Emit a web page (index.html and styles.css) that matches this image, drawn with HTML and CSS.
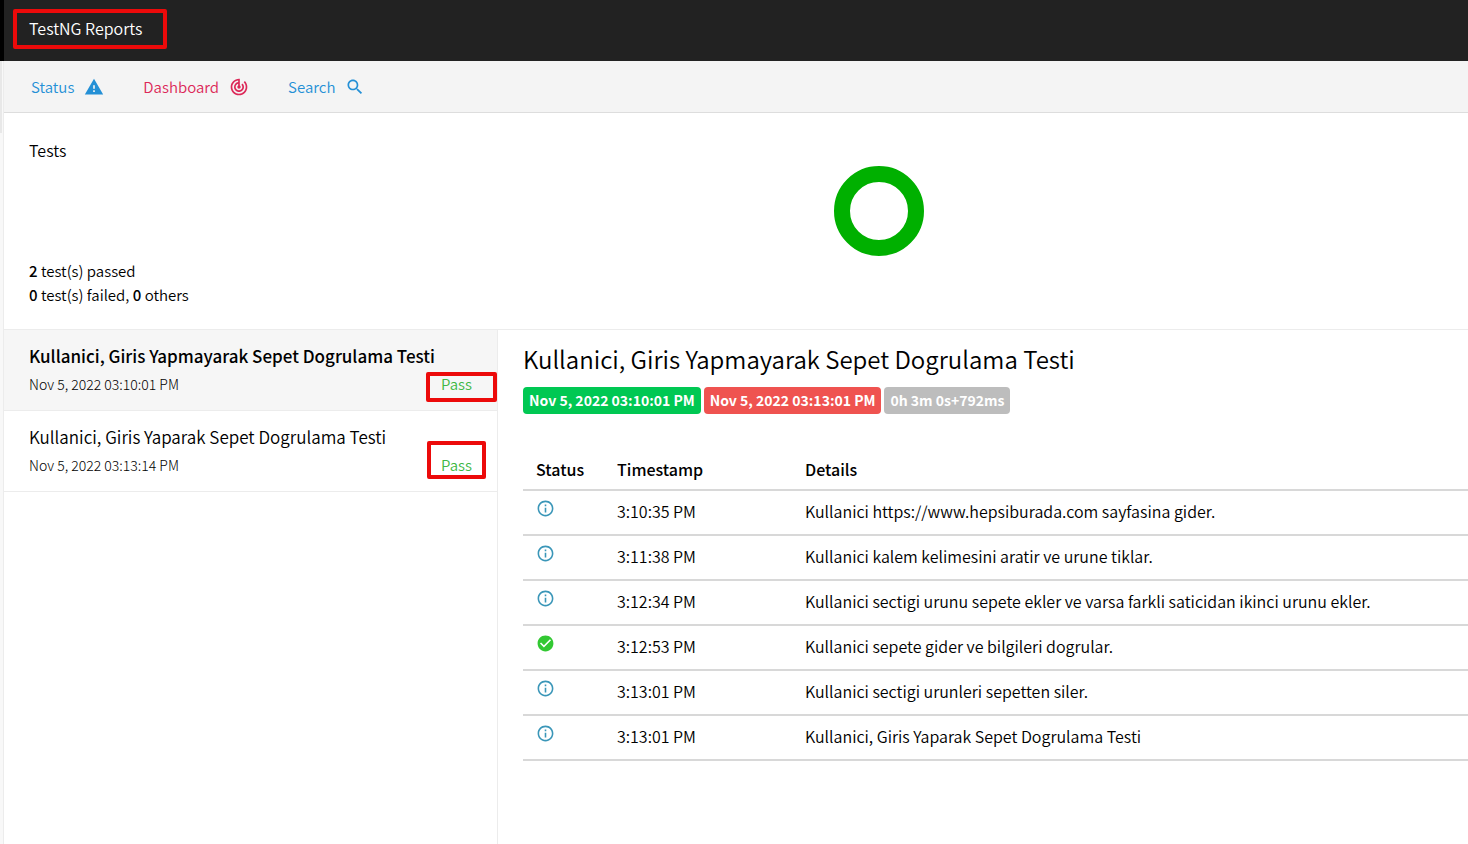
FILE: index.html
```html
<!DOCTYPE html>
<html lang="en">
<head>
<meta charset="utf-8">
<title>TestNG Reports</title>
<link rel="stylesheet" href="styles.css">
</head>
<body>
<svg class="sprite" aria-hidden="true">
  <symbol id="info" viewBox="0 0 24 24"><path d="M11 17h2v-6h-2v6zm1-15C6.480 2 2 6.480 2 12s4.480 10 10 10 10-4.480 10-10S17.520 2 12 2zm0 18c-4.410 0-8-3.590-8-8s3.590-8 8-8 8 3.590 8 8-3.590 8-8 8zM11 9h2V7h-2v2z"/></symbol>
  <symbol id="check" viewBox="0 0 24 24"><path d="M12 2C6.480 2 2 6.480 2 12s4.480 10 10 10 10-4.480 10-10S17.520 2 12 2zm-2 15l-5-5 1.410-1.410L10 14.170l7.590-7.590L19 8l-9 9z"/></symbol>
</svg>
<div class="shell">
  <div class="rail"><div class="rail-top"></div><div class="rail-thumb"></div></div>
  <div class="app">
    <header class="topbar"><h1 class="brand mark mark-brand">TestNG Reports</h1></header>
    <nav class="toolbar">
      <a class="tool" href="#status">Status
        <svg class="tool-icon" viewBox="0 0 24 24"><path d="M1 21h22L12 2 1 21zm12-3h-2v-2h2v2zm0-4h-2v-4h2v4z"/></svg></a>
      <a class="tool tool-active" href="#dashboard">Dashboard
        <svg class="tool-icon" viewBox="0 0 24 24"><path d="M19.070 4.930l-1.410 1.410C19.100 7.790 20 9.790 20 12c0 4.420-3.580 8-8 8s-8-3.580-8-8c0-4.080 3.050-7.440 7-7.930v2.020C8.160 6.570 6 9.030 6 12c0 3.310 2.690 6 6 6s6-2.690 6-6c0-1.660-.67-3.160-1.760-4.240l-1.410 1.410C15.550 9.900 16 10.900 16 12c0 2.210-1.790 4-4 4s-4-1.790-4-4c0-1.860 1.280-3.410 3-3.860v2.140c-.6.350-1 .98-1 1.720 0 1.100.9 2 2 2s2-.9 2-2c0-.74-.4-1.380-1-1.720V2h-1C6.480 2 2 6.480 2 12s4.480 10 10 10 10-4.480 10-10c0-2.760-1.120-5.260-2.930-7.070z"/></svg></a>
      <a class="tool" href="#search">Search
        <svg class="tool-icon" viewBox="0 0 24 24"><path d="M15.500 14h-.79l-.28-.27C15.410 12.590 16 11.110 16 9.500 16 5.910 13.090 3 9.500 3S3 5.910 3 9.500 5.910 16 9.500 16c1.610 0 3.090-.59 4.230-1.570l.27.28v.79l5 4.990L20.490 19l-4.990-5zm-6 0C7.010 14 5 11.990 5 9.500S7.010 5 9.500 5 14 7.010 14 9.500 11.990 14 9.500 14z"/></svg></a>
    </nav>
    <section class="summary">
      <div class="summary-text">
        <h2 class="summary-title">Tests</h2>
        <div class="counts"><div><b>2</b> test(s) passed</div><div><b>0</b> test(s) failed, <b>0</b> others</div></div>
      </div>
      <svg class="donut" viewBox="0 0 90 90" role="img" aria-label="2 passed"><circle cx="45" cy="45" r="37"/></svg>
    </section>
    <main class="main">
      <ul class="tests">
        <li class="test test-active">
          <div class="test-name">Kullanici, Giris Yapmayarak Sepet Dogrulama Testi</div>
          <div class="test-meta"><span class="date">Nov 5, 2022 03:10:01 PM</span><span class="pass mark mark-first">Pass</span></div>
        </li>
        <li class="test">
          <div class="test-name">Kullanici, Giris Yaparak Sepet Dogrulama Testi</div>
          <div class="test-meta"><span class="date">Nov 5, 2022 03:13:14 PM</span><span class="pass mark mark-second">Pass</span></div>
        </li>
      </ul>
      <section class="detail">
        <h2 class="detail-title">Kullanici, Giris Yapmayarak Sepet Dogrulama Testi</h2>
        <div class="labels">
          <span class="label label-start">Nov 5, 2022 03:10:01 PM</span>
          <span class="label label-end">Nov 5, 2022 03:13:01 PM</span>
          <span class="label label-time">0h 3m 0s+792ms</span>
        </div>
        <table class="steps">
          <thead><tr><th class="col-status">Status</th><th class="col-time">Timestamp</th><th>Details</th></tr></thead>
          <tbody>
            <tr><td><svg class="state"><use href="#info"/></svg></td><td>3:10:35 PM</td><td>Kullanici https://www.hepsiburada.com sayfasina gider.</td></tr>
            <tr><td><svg class="state"><use href="#info"/></svg></td><td>3:11:38 PM</td><td>Kullanici kalem kelimesini aratir ve urune tiklar.</td></tr>
            <tr><td><svg class="state"><use href="#info"/></svg></td><td>3:12:34 PM</td><td>Kullanici sectigi urunu sepete ekler ve varsa farkli saticidan ikinci urunu ekler.</td></tr>
            <tr><td><svg class="state state-pass"><use href="#check"/></svg></td><td>3:12:53 PM</td><td>Kullanici sepete gider ve bilgileri dogrular.</td></tr>
            <tr><td><svg class="state"><use href="#info"/></svg></td><td>3:13:01 PM</td><td>Kullanici sectigi urunleri sepetten siler.</td></tr>
            <tr><td><svg class="state"><use href="#info"/></svg></td><td>3:13:01 PM</td><td>Kullanici, Giris Yaparak Sepet Dogrulama Testi</td></tr>
          </tbody>
        </table>
      </section>
    </main>
  </div>
</div>
</body>
</html>
```
FILE: styles.css
```css
* { box-sizing: border-box; }
body {
  margin: 0;
  background: #fff;
  color: #000;
  font-family: "Noto Sans CJK SC", "Open Sans", sans-serif;
  font-size: 16px;
  font-weight: 350;
  line-height: 24px;
}
h1, h2 { margin: 0; font-weight: 350; }
.sprite { display: block; width: 0; height: 0; }
.shell { display: flex; min-height: 100vh; }
.rail { flex: none; width: 4px; background: #f8f8f8; border-right: 1px solid #ececec; }
.rail-top { width: 4px; height: 61px; background: #000; }
.rail-thumb { width: 2px; height: 72px; background: #e8e8e8; }
.app { flex: 1; min-width: 0; display: flex; flex-direction: column; }

.topbar { height: 61px; padding: 16px 25px; background: #222; color: #fff; }
.brand { display: inline-block; font-size: 16px; line-height: 24px; }

.mark { position: relative; }
.mark::after {
  content: "";
  position: absolute;
  border: 4px solid #ec0a0a;
  border-radius: 2px;
}
.mark-brand::after { inset: -7px -25px -9px -16px; }
.mark-first::after { inset: 0 -25px -6px -15px; }
.mark-second::after { inset: -12px -14px -2px -14px; }

.toolbar {
  display: flex;
  gap: 39px;
  height: 52px;
  padding: 0 27px;
  align-items: center;
  background: #f4f4f4;
  border-bottom: 1px solid #ddd;
}
.tool { display: flex; align-items: center; gap: 10px; color: #2490d6; font-size: 15px; text-decoration: none; }
.tool-active { color: #dc2858; }
.tool-icon { width: 20px; height: 20px; fill: currentColor; }

.summary { display: flex; height: 217px; padding: 25px 0 22px 25px; border-bottom: 1px solid #ececec; }
.summary-text { flex: none; width: 260px; display: flex; flex-direction: column; justify-content: space-between; }
.summary-title { font-size: 16px; }
.counts { font-size: 15px; }
b { font-weight: 500; }
.donut { width: 90px; height: 90px; margin: 28px auto 0; fill: none; stroke: #00b000; stroke-width: 16; }

.main { flex: 1; display: flex; }
.tests { flex: none; width: 494px; margin: 0; padding: 0; list-style: none; border-right: 1px solid #ececec; }
.test { height: 81px; padding: 14px 25px 0; border-bottom: 1px solid #ececec; }
.test-active { background: #f6f6f6; }
.test-active .test-name { font-weight: 500; }
.test-name { font-size: 17px; }
.test-meta { display: flex; justify-content: space-between; padding-top: 4px; font-size: 14px; }
.date { font-weight: 300; }
.pass { color: #40b844; font-size: 15px; }

.detail { flex: 1; min-width: 0; padding: 13px 0 0 25px; }
.detail-title { font-size: 24px; line-height: 32px; }
.labels { display: flex; gap: 3px; padding-top: 12px; }
.label { padding: 0 6px; border-radius: 4px; color: #fff; font-size: 14px; font-weight: 700; line-height: 27px; }
.label-start { background: #00c853; }
.label-end { background: #ef5350; }
.label-time { background: #bdbdbd; }

.steps { width: 100%; margin-top: 35px; border-collapse: separate; border-spacing: 0; table-layout: fixed; }
.steps th, .steps td { padding: 0 13px; text-align: left; border-bottom: 2px solid #d8d8d8; }
.steps th { height: 42px; padding-bottom: 1px; font-weight: 500; }
.steps td { height: 45px; padding-bottom: 3px; }
.col-status { width: 81px; }
.col-time { width: 188px; }
.state { display: block; width: 19px; height: 19px; margin-top: -6px; fill: #3a96b8; }
.state-pass { fill: #32c832; }
```
